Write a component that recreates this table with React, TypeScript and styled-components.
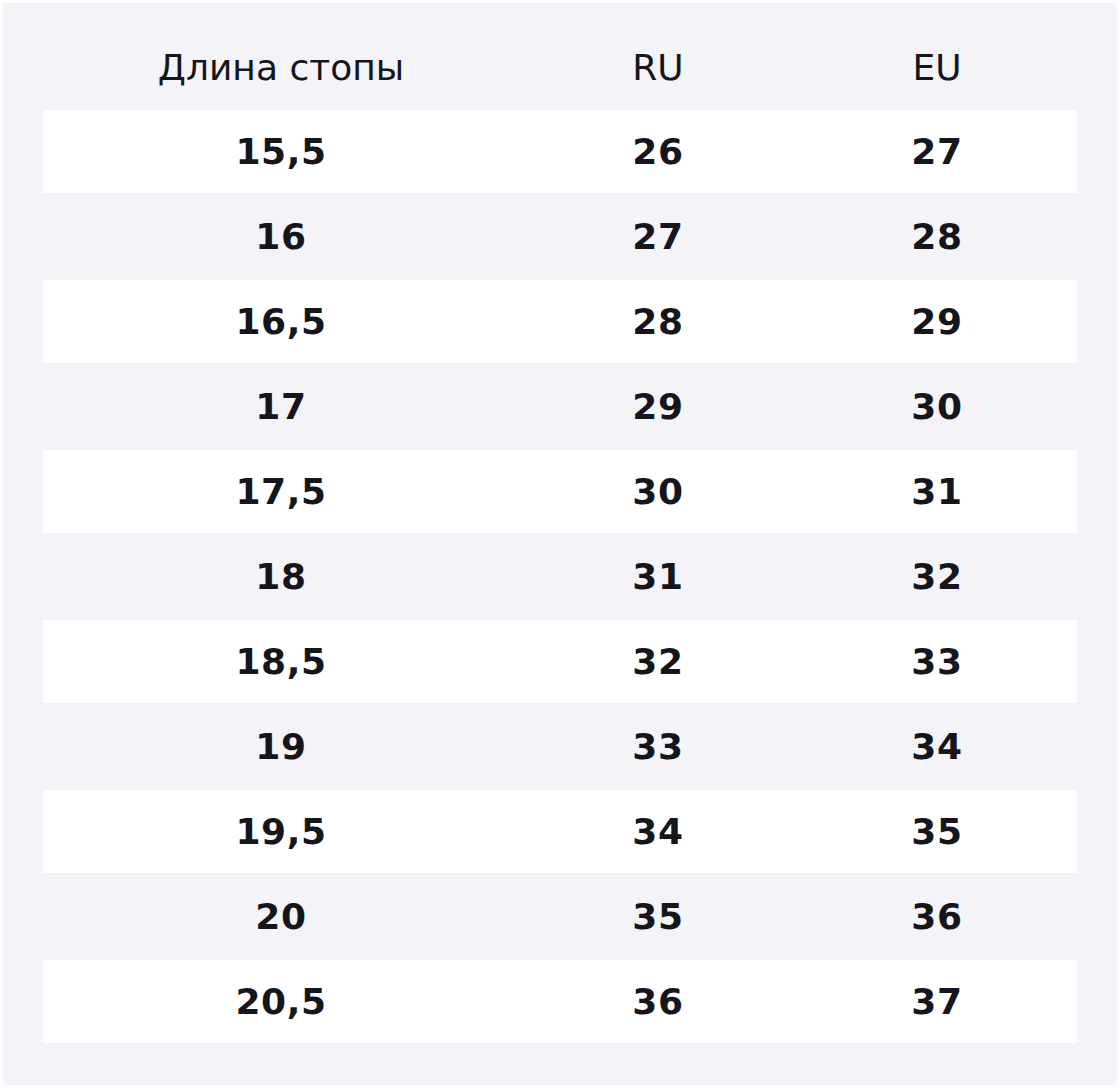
import React, { FC } from "react";
import styled, { createGlobalStyle, css } from "styled-components";

const GlobalStyle = createGlobalStyle`
  html, body {
    margin: 0;
    padding: 0;
    background: #ffffff;
  }

  body {
    font-family: "DejaVu Sans", "Liberation Sans", sans-serif;
    color: #15151c;
  }
`;

const Panel = styled.div`
  margin: 3px;
  width: 1114px;
  box-sizing: border-box;
  padding: 0 40px 42px;
  background: #f3f3f8;
`;

const Table = styled.div`
  display: flex;
  flex-direction: column;
`;

interface RowProps {
  readonly variant: "header" | "light" | "shaded";
}

const Row = styled.div<RowProps>`
  display: grid;
  grid-template-columns: 476px 278px 280px;
  align-items: center;

  ${(props) =>
    props.variant === "header"
      ? css`
          height: 107px;
          align-items: start;
          padding-top: 44px;
          box-sizing: border-box;
        `
      : ""}
  ${(props) =>
    props.variant === "light"
      ? css`
          height: 83px;
          background: #ffffff;
        `
      : ""}
  ${(props) =>
    props.variant === "shaded"
      ? css`
          height: 87px;
          background: transparent;
        `
      : ""}
`;

interface CellProps {
  readonly head?: boolean;
}

const Cell = styled.div<CellProps>`
  text-align: center;
  font-size: 36px;
  line-height: 42px;
  font-weight: ${(props) => (props.head ? 400 : 700)};
  letter-spacing: ${(props) => (props.head ? "0" : "0.6px")};
`;

const sizes: [string, string, string][] = [
  ["15,5", "26", "27"],
  ["16", "27", "28"],
  ["16,5", "28", "29"],
  ["17", "29", "30"],
  ["17,5", "30", "31"],
  ["18", "31", "32"],
  ["18,5", "32", "33"],
  ["19", "33", "34"],
  ["19,5", "34", "35"],
  ["20", "35", "36"],
  ["20,5", "36", "37"],
];

const App: FC = () => (
  <>
    <GlobalStyle />
    <Panel>
      <Table>
        <Row variant="header">
          <Cell head>Длина стопы</Cell>
          <Cell head>RU</Cell>
          <Cell head>EU</Cell>
        </Row>
        {sizes.map(([foot, ru, eu], i) => (
          <Row key={foot} variant={i % 2 === 0 ? "light" : "shaded"}>
            <Cell>{foot}</Cell>
            <Cell>{ru}</Cell>
            <Cell>{eu}</Cell>
          </Row>
        ))}
      </Table>
    </Panel>
  </>
);

export default App;
